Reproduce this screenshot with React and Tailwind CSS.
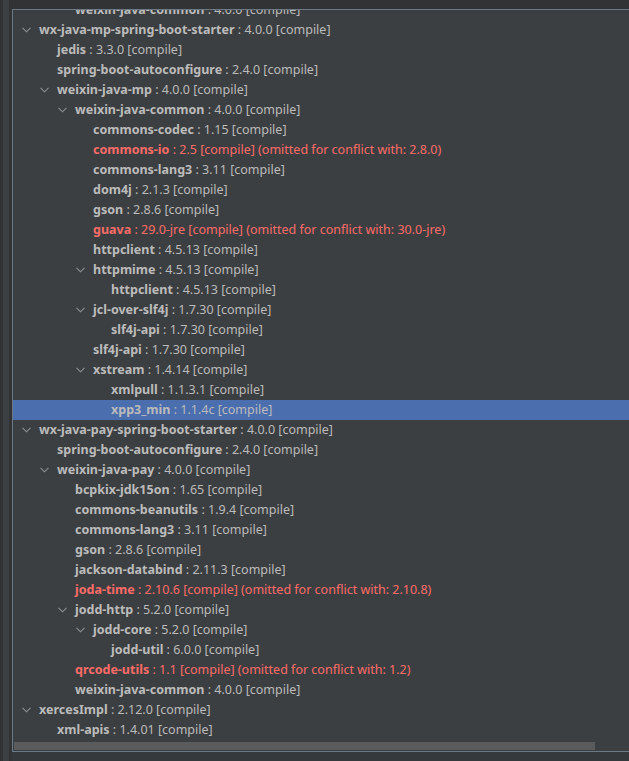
import React from "react";

// [level, name, version, omitted-for, expandable, selected]
const rows = [
  [2, "weixin-java-common", "4.0.0 [compile]"],
  [0, "wx-java-mp-spring-boot-starter", "4.0.0 [compile]", null, true],
  [1, "jedis", "3.3.0 [compile]"],
  [1, "spring-boot-autoconfigure", "2.4.0 [compile]"],
  [1, "weixin-java-mp", "4.0.0 [compile]", null, true],
  [2, "weixin-java-common", "4.0.0 [compile]", null, true],
  [3, "commons-codec", "1.15 [compile]"],
  [3, "commons-io", "2.5 [compile]", "2.8.0"],
  [3, "commons-lang3", "3.11 [compile]"],
  [3, "dom4j", "2.1.3 [compile]"],
  [3, "gson", "2.8.6 [compile]"],
  [3, "guava", "29.0-jre [compile]", "30.0-jre"],
  [3, "httpclient", "4.5.13 [compile]"],
  [3, "httpmime", "4.5.13 [compile]", null, true],
  [4, "httpclient", "4.5.13 [compile]"],
  [3, "jcl-over-slf4j", "1.7.30 [compile]", null, true],
  [4, "slf4j-api", "1.7.30 [compile]"],
  [3, "slf4j-api", "1.7.30 [compile]"],
  [3, "xstream", "1.4.14 [compile]", null, true],
  [4, "xmlpull", "1.1.3.1 [compile]"],
  [4, "xpp3_min", "1.1.4c [compile]", null, false, true],
  [0, "wx-java-pay-spring-boot-starter", "4.0.0 [compile]", null, true],
  [1, "spring-boot-autoconfigure", "2.4.0 [compile]"],
  [1, "weixin-java-pay", "4.0.0 [compile]", null, true],
  [2, "bcpkix-jdk15on", "1.65 [compile]"],
  [2, "commons-beanutils", "1.9.4 [compile]"],
  [2, "commons-lang3", "3.11 [compile]"],
  [2, "gson", "2.8.6 [compile]"],
  [2, "jackson-databind", "2.11.3 [compile]"],
  [2, "joda-time", "2.10.6 [compile]", "2.10.8"],
  [2, "jodd-http", "5.2.0 [compile]", null, true],
  [3, "jodd-core", "5.2.0 [compile]", null, true],
  [4, "jodd-util", "6.0.0 [compile]"],
  [2, "qrcode-utils", "1.1 [compile]", "1.2"],
  [2, "weixin-java-common", "4.0.0 [compile]"],
  [0, "xercesImpl", "2.12.0 [compile]", null, true],
  [1, "xml-apis", "1.4.01 [compile]"],
];

const indent = ["pl-[9px]", "pl-[27px]", "pl-[45px]", "pl-[63px]", "pl-[81px]"];

function Chevron() {
  return (
    <svg width="9" height="6" viewBox="0 0 9 6" className="shrink-0">
      <path d="M0.5 0.8 L4.5 4.8 L8.5 0.8" fill="none" stroke="#8e9193" strokeWidth="1.1" />
    </svg>
  );
}

function Row({ row }) {
  const [level, name, version, omitted, expandable, selected] = row;
  const red = !!omitted;
  return (
    <div
      className={`h-[20px] flex items-center whitespace-nowrap ${indent[level]} ${
        selected ? "bg-[#4b6eaf]" : ""
      }`}
    >
      <div className="w-[17px] shrink-0 flex items-center">{expandable && <Chevron />}</div>
      <span className={`font-bold ${red ? "text-[#ff6b68]" : "text-[#bbbbbb]"}`}>{name}</span>
      <span className={red ? "text-[#ff6b68]" : "text-[#bbbbbb]"}>
        &nbsp;: {version}
        {red && ` (omitted for conflict with: ${omitted})`}
      </span>
    </div>
  );
}

export default function App() {
  return (
    <div
      className="w-[629px] h-[761px] bg-[#313335] flex overflow-hidden text-[12.5px] leading-none"
      style={{ fontFamily: '"Noto Sans", "Open Sans", sans-serif' }}
    >
      {/* left gutter scrollbar */}
      <div className="w-[12px] shrink-0 pl-[3px]">
        <div className="w-[6px] h-full bg-[#3d4042]" />
      </div>

      <div className="flex-1 flex flex-col">
        <div className="mt-[9px] h-[743px] border-l border-t border-b border-[#6b7987] bg-[#3c3f41] flex flex-col overflow-hidden">
          <div className="flex-1 overflow-hidden">
            <div className="-mt-[10px]">
              {rows.map((r, i) => (
                <Row key={i} row={r} />
              ))}
            </div>
          </div>
          <div className="h-[10px] shrink-0 flex items-start pt-[1px]">
            <div className="ml-[1px] w-[581px] h-[8px] bg-[#595b5d]" />
          </div>
        </div>
        <div className="flex-1 bg-[#36393b]" />
      </div>
    </div>
  );
}
